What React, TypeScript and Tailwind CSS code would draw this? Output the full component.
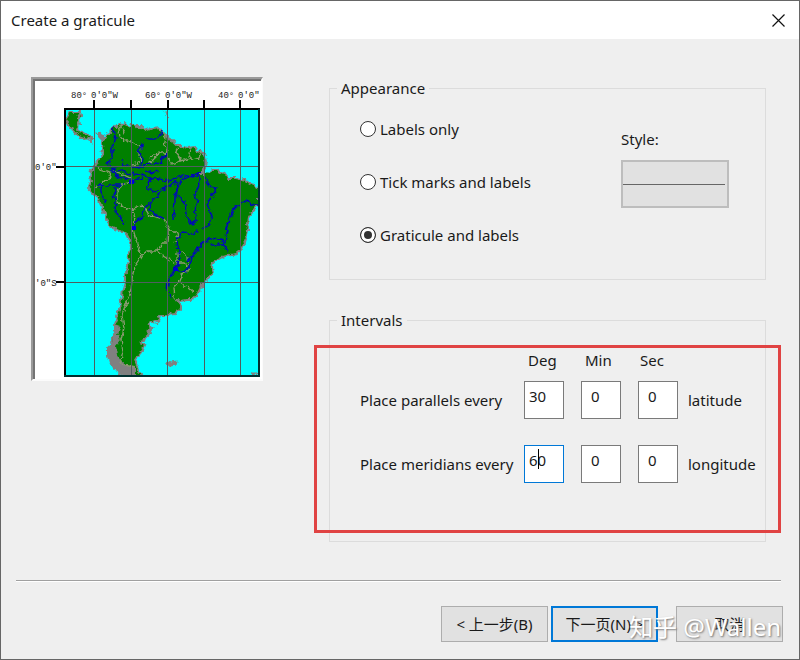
import { useState } from "react";

const STYLES = ["Labels only", "Tick marks and labels", "Graticule and labels"];

const SOUTH_AMERICA =
  "M104 138L107 134L110 133L112 127L114 125L117 127L119 124L122 125L125 123L129 126L133 124L136 127L142 127L145 130L150 128L153 129L160 128L162 132L167 135L169 139L173 141L178 146L184 146L188 148L195 147L197 150L201 151L205 157L206 163L204 168L207 172L211 170L217 170L221 173L227 175L229 178L236 178L245 180L250 184L255 185L259 188L259 205L256 207L252 212L248 218L247 224L248 230L247 237L245 243L242 250L237 254L230 255L223 257L218 260L213 263L212 268L213 273L208 278L205 283L201 287L198 293L195 297L191 300L187 300L181 301L177 300L181 306L181 309L177 311L175 314L168 315L160 315L158 322L154 321L148 323L151 328L150 333L145 338L144 341L140 342L142 345L145 345L143 350L137 357L135 360L137 365L138 371L142 375L125 375L119 372L113 368L110 362L108 355L108 348L111 344L112 338L115 331L115 325L117 320L116 316L119 310L120 302L122 297L123 288L125 281L125 275L128 266L129 255L131 248L130 242L127 236L122 232L110 226L108 223L106 215L103 210L100 203L97 197L93 194L90 190L88 188L90 184L92 180L90 176L91 171L95 166L98 160L102 156L103 151L102 145Z";

const CENTRAL_AMERICA =
  "M65 120L67 117L70 112L80 112L81 115L78 119L79 125L78 130L82 132L85 134L88 134L92 138L92 141L88 139L84 138L79 136L76 133L73 130L70 128L68 123Z";

const BORDERS = [
  "M122 125L119 130L120 136L122 139L129 141L133 143L140 146L139 155L142 160L137 164L132 165",
  "M122 128L125 132L124 134",
  "M95 165L101 170L111 172L110 177L105 180L101 185L95 187",
  "M112 171L122 174L130 178L133 181",
  "M132 183L122 185L117 192L117 201L123 207L129 210L133 208",
  "M133 208L142 206L146 210L149 215L160 218L165 219L169 231",
  "M132 208L134 219L133 229L136 240L139 250L142 254L138 261L134 267L132 280L131 290L127 302L122 315L124 328L121 340L123 352L120 364L135 367",
  "M142 254L149 251L158 251L161 243L168 243L169 231L176 231L178 239L173 242",
  "M158 251L163 256L170 260L177 263L184 263L190 269L183 274L180 281L174 288L175 298",
  "M177 262L177 253L183 252L187 258L189 265",
  "M180 282L189 288L194 292",
  "M160 129L166 137L164 145L168 151L163 153L153 154L149 158",
  "M178 146L176 152L181 158L180 161L172 164L168 158",
  "M190 148L189 155L192 160L199 158L202 152",
  "M180 161L191 158",
  "M160 153L153 160L145 165",
];

const RIVERS = [
  "M113 125L113 131L116 138L112 148L112 158L106 165L116 167",
  "M112 168L117 171L121 170L126 173L134 174L145 175L151 179L156 178L163 181L173 179L184 175L193 177L201 172",
  "M110 168L118 177L129 179L134 181L143 177",
  "M99 185L107 186L115 185L122 185",
  "M100 187L103 197L106 204",
  "M118 186L113 194L116 202L115 210L119 216L125 224",
  "M121 160L125 165L131 167L142 168L147 163L154 165L161 162L167 152",
  "M147 139L154 139L160 136L162 130",
  "M143 142L139 150L143 160L139 168",
  "M133 229L135 222L142 218L143 211L149 203L154 199L163 190L172 184L182 180L190 176L199 175",
  "M149 203L150 210L157 216L165 219",
  "M182 180L175 192L175 203L173 220",
  "M179 184L176 195L185 202L186 215L191 224L196 221L195 210L198 203L195 195L199 184L199 174",
  "M205 176L210 187L216 189L211 197L207 204L212 215L209 225L202 230",
  "M226 230L229 219L234 209L239 205L247 201L254 205L258 205",
  "M198 230L193 234L183 232L177 239L178 252L180 259L174 270L168 282L167 292L172 297",
  "M180 259L175 270L185 272L190 265L192 257L201 246L209 239L222 238L225 247L229 251",
  "M225 226L228 230L224 245L210 245",
  "M187 261L196 249L205 242",
  "M151 178L147 186L153 192L166 187",
  "M145 170L151 173L158 171",
];

const MapPreview = () => (
  <svg viewBox="31 77 232 304" className="block w-full" role="img" aria-label="Graticule preview">
    <defs>
      {/* roughens the coast, borders and rivers */}
      <filter id="rough" x="-5%" y="-5%" width="110%" height="110%">
        <feTurbulence type="fractalNoise" baseFrequency="0.22" numOctaves="2" seed="4" />
        <feDisplacementMap in="SourceGraphic" scale="6" xChannelSelector="R" yChannelSelector="G" />
      </filter>
      <clipPath id="sea">
        <rect x="65" y="109" width="194" height="267" />
      </clipPath>
    </defs>
    <rect x="31" y="77" width="232" height="304" fill="#fbfbfb" />
    <path d="M31 381V77H263L261 80H34V378Z" fill="#9a9a9a" />
    <path d="M33 379V79H261V81H35V379Z" fill="#747474" />
    <rect x="35" y="81" width="227" height="298" fill="#fff" />
    <rect x="65" y="109" width="194" height="267" fill="#00ffff" />
    <g clipPath="url(#sea)">
      <g filter="url(#rough)">
        <g fill="#008000" stroke="#808080" strokeWidth="2">
          <path d={CENTRAL_AMERICA} />
          <path d={SOUTH_AMERICA} />
        </g>
        <path d="M96 134L99 133L102 136L105 138L102 140" fill="#808080" stroke="#808080" strokeWidth="2" />
        {/* southern fjords and islands */}
        <path
          d="M115 325L121 327L118 334L120 341L116 346L117 355L121 361L126 365L135 367L135 375L124 375L113 369L109 360L108 349L112 343Z"
          fill="#808080"
        />
        <path
          d="M165 363L168 361L171 363L177 362L176 365L172 366L169 365L165 364ZM149 328L155 328L152 331L148 332ZM200 285L205 282L204 288L200 288ZM202 168L207 172L203 176L200 173ZM252 373L256 373L258 375ZM165 110L166 114M168 118L170 120"
          fill="#808080"
          stroke="#808080"
        />
        <g fill="none" stroke="#8a9a70" strokeWidth="1.3">
          {BORDERS.map((d) => (
            <path key={d} d={d} />
          ))}
        </g>
        <g fill="none" stroke="#0010b0" strokeWidth="1.6">
          {RIVERS.map((d) => (
            <path key={d} d={d} />
          ))}
        </g>
        <path d="M206 168L212 169L207 174L204 173Z" fill="#00ffff" />
      </g>
    </g>
    <g shapeRendering="crispEdges">
      <path d="M129 180H134V184H129ZM132 226H136V230H132ZM174 268H178V271H174Z" fill="#0000dd" />
      <path
        d="M94.5 109V376M131.5 109V376M167.5 109V376M204.5 109V376M240.5 109V376M65 166.5H259M65 282.5H259"
        stroke="#4f5f5f"
        strokeWidth="1"
      />
      <path d="M64 109H260M65 108V377" stroke="#000" strokeWidth="2" />
      <path d="M259 109V377M64 376H260" stroke="#003030" strokeWidth="2" />
      <path
        d="M94 100V109M131 100V109M168 100V109M204 100V109M240 100V109M56 167H65M56 282H65"
        stroke="#000"
        strokeWidth="2"
      />
    </g>
    <g fontFamily="'Liberation Mono', monospace" fontSize="9" fill="#222">
      <text x="71" y="98">80°</text>
      <text x="91" y="98">0'0"W</text>
      <text x="145" y="98">60°</text>
      <text x="165" y="98">0'0"W</text>
      <text x="218" y="98">40°</text>
      <text x="238" y="98">0'0"</text>
      <text x="35" y="170">0'0"</text>
      <text x="35" y="286">'0"S</text>
    </g>
  </svg>
);

const IntervalRow = ({ label, unit, values, active = false }) => (
  <>
    <span className="whitespace-nowrap">{label}</span>
    {values.map((value, i) => (
      <div key={i} className="relative">
        <input
          type="text"
          aria-label={`${label} ${["degrees", "minutes", "seconds"][i]}`}
          defaultValue={value}
          className={`block h-[38px] w-10 border bg-white pb-2 outline-none ${i === 0 ? "pl-1" : "pl-[9px]"} ${
            active && i === 0 ? "border-[#0078d7]" : "border-[#7a7a7a]"
          }`}
        />
        {active && i === 0 && <span className="absolute left-[14px] top-1 h-5 w-px bg-black" />}
      </div>
    ))}
    <span>{unit}</span>
  </>
);

const App = () => {
  const [style, setStyle] = useState(STYLES[2]);

  return (
    <div className="relative flex min-h-screen flex-col border border-[#666] bg-[#efefef] font-['Noto_Sans','Noto_Sans_CJK_SC',sans-serif] text-[15px] leading-[22px] text-[#1a1a1a]">
      <header className="flex h-[38px] items-center justify-between bg-white pl-[10px] pr-[14px]">
        <h1>Create a graticule</h1>
        <button type="button" aria-label="Close">
          <svg width="13" height="13" viewBox="0 0 13 13" stroke="#111" strokeWidth="1.2">
            <path d="M0.5 0.5L12.5 12.5M12.5 0.5L0.5 12.5" />
          </svg>
        </button>
      </header>

      <main className="flex flex-1 items-start gap-[66px] pl-[30px] pr-[33px] pt-[38px]">
        <div className="w-[232px] shrink-0">
          <MapPreview />
        </div>

        <div className="flex flex-1 flex-col gap-[29px]">
          <fieldset className="border border-[#dcdcdc] pb-[33px] pl-[7px] pr-9">
            <legend className="px-1">Appearance</legend>
            <div className="flex items-start justify-between pl-[23px] pt-[19px]">
              <div className="flex flex-col gap-[31px]">
                {STYLES.map((name) => (
                  <label key={name} className="flex items-center gap-1">
                    <input
                      type="radio"
                      name="appearance"
                      checked={style === name}
                      onChange={() => setStyle(name)}
                      className="size-4 appearance-none rounded-full border border-[#333] bg-white checked:border-[#333] checked:bg-[#333] checked:shadow-[inset_0_0_0_3px_#fff]"
                    />
                    {name}
                  </label>
                ))}
              </div>
              <div className="mt-[10px] flex w-[108px] flex-col gap-[10px]">
                <span id="line-style">Style:</span>
                <button
                  type="button"
                  aria-labelledby="line-style"
                  className="flex h-12 items-center border-2 border-[#bdbdbd] bg-[#e1e1e1] pr-[2px]"
                >
                  <span className="h-px w-full bg-[#666]" />
                </button>
              </div>
            </div>
          </fieldset>

          <fieldset className="relative border border-[#dcdcdc] pb-[58px] pl-[7px]">
            <legend className="px-1">Intervals</legend>
            <div className="grid grid-cols-[164px_57px_57px_50px_1fr] items-center pl-[23px] pt-[18px]">
              <span />
              <span className="pl-1">Deg</span>
              <span className="pl-1">Min</span>
              <span className="pl-[2px]">Sec</span>
              <span />
              <div className="col-span-5 h-[10px]" />
              <IntervalRow label="Place parallels every" unit="latitude" values={[30, 0, 0]} />
              <div className="col-span-5 h-[26px]" />
              <IntervalRow label="Place meridians every" unit="longitude" values={[60, 0, 0]} active />
            </div>
            <div className="pointer-events-none absolute -left-4 -right-4 bottom-2 top-[14px] border-[3px] border-[#e04343]" />
          </fieldset>
        </div>
      </main>

      <footer className="pb-[17px] pl-[15px] pr-4">
        <div className="mr-[2px] border-b border-t border-b-white border-t-[#a0a0a0]" />
        <div className="flex justify-end pt-6">
          <button type="button" className="mr-[3px] h-9 w-[107px] border border-[#adadad] bg-[#e1e1e1]">
            &lt; 上一步(B)
          </button>
          <button type="button" className="mr-[18px] h-9 w-[107px] border-2 border-[#0078d7] bg-[#e1e1e1]">
            下一页(N) &gt;
          </button>
          <button type="button" className="h-9 w-[107px] border border-[#adadad] bg-[#e1e1e1]">
            取消
          </button>
        </div>
      </footer>

      <div className="pointer-events-none absolute bottom-[14px] right-[18px] whitespace-nowrap text-[24px] leading-9 text-white [text-shadow:1px_1px_2px_#777]">
        知乎 @Wallen
      </div>
    </div>
  );
};

export default App;
